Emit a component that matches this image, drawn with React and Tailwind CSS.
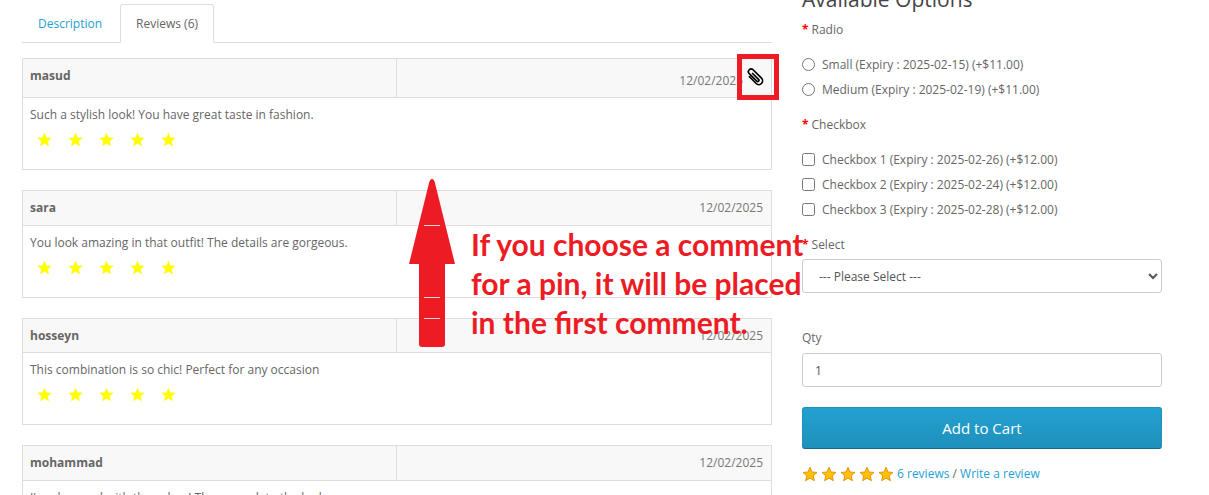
const reviews = [
  { name: 'masud', text: 'Such a stylish look! You have great taste in fashion.', head: 'h-[39px]', nameCls: 'pb-1', dateCls: 'pt-[6px] pr-[28px]' },
  { name: 'sara', text: 'You look amazing in that outfit! The details are gorgeous.', head: 'h-[35px]', nameCls: '', dateCls: 'pr-2' },
  { name: 'hosseyn', text: 'This combination is so chic! Perfect for any occasion', head: 'h-[34px]', nameCls: '', dateCls: 'pr-2' },
  { name: 'mohammad', text: "I'm obsessed with the colors! They complete the look", head: 'h-[35px]', nameCls: '', dateCls: 'pr-2' },
];

function YellowStar() {
  return (
    <svg width="15" height="15" viewBox="0 0 24 24" className="block">
      <path fill="#ffff00" d="M12 1l3.2 7.6 8.2.7-6.2 5.4 1.9 8L12 18.500l-7.100 4.200 1.900-8L.6 9.300l8.200-.7z" />
    </svg>
  );
}

function GoldStar() {
  return (
    <svg width="16" height="16" viewBox="0 0 24 24" className="block">
      <path fill="#ffc107" stroke="#e8930c" strokeWidth="1.500" d="M12 2l3 7 7.500.7-5.700 5 1.700 7.300L12 18.200 5.500 22l1.700-7.300-5.700-5L9 9z" />
    </svg>
  );
}

function ReviewCard({ review }) {
  return (
    <div className="border border-[#ddd] mb-5">
      <div className={`flex ${review.head} bg-[#f8f8f8] border-b border-[#ddd]`}>
        <div className={`w-[374px] border-r border-[#ddd] px-[7px] flex items-center font-bold text-[#666] ${review.nameCls}`}>{review.name}</div>
        <div className={`flex-1 flex items-center justify-end text-[#777] ${review.dateCls}`}>12/02/2025</div>
      </div>
      <div className="h-[71px] px-[7px] pt-2">
        <p className="leading-[18px]">{review.text}</p>
        <div className="flex gap-4 pl-[7px] pt-2">
          {[0, 1, 2, 3, 4].map(i => <YellowStar key={i} />)}
        </div>
      </div>
    </div>
  );
}

function Label({ children, required = true, className = '' }) {
  return (
    <div className={`flex items-center gap-[3px] h-[18px] ${className}`}>
      {required && <span className="text-[#f00] font-bold">*</span>}
      <span>{children}</span>
    </div>
  );
}

function Option({ type, name, children }) {
  return (
    <label className="flex items-center gap-[7px] h-[25px]">
      <input type={type} name={name} className="w-[13px] h-[13px] m-0" />
      <span>{children}</span>
    </label>
  );
}

export default function App() {
  return (
    <div className="relative h-[495px] w-[1209px] overflow-hidden bg-white text-[12px] text-[#666] font-['Open_Sans',sans-serif]">
      <div className="flex items-start pl-[22px] gap-[30px]">
        <div className="w-[750px] pt-1 shrink-0">
          <div className="flex h-[39px] border-b border-[#ddd] pl-[2px] mb-[15px]">
            <div className="px-[14px] mr-1 h-[38px] pt-[2px] flex items-center text-[#23a1d1]">Description</div>
            <div className="px-[15px] h-[39px] pt-[1px] flex items-center bg-white border border-[#ddd] border-b-white rounded-t-[3px]">Reviews (6)</div>
          </div>
          {reviews.map(r => <ReviewCard key={r.name} review={r} />)}
        </div>

        <div className="w-[360px] shrink-0 -mt-[15px]">
          <h3 className="text-[21px] leading-[28px] text-[#444] mb-2">Available Options</h3>
          <Label className="mb-[13px]">Radio</Label>
          <Option type="radio" name="radio">Small (Expiry : 2025-02-15) (+$11.00)</Option>
          <Option type="radio" name="radio">Medium (Expiry : 2025-02-19) (+$11.00)</Option>
          <Label className="mt-[14px] mb-[13px]">Checkbox</Label>
          <Option type="checkbox">Checkbox 1 (Expiry : 2025-02-26) (+$12.00)</Option>
          <Option type="checkbox">Checkbox 2 (Expiry : 2025-02-24) (+$12.00)</Option>
          <Option type="checkbox">Checkbox 3 (Expiry : 2025-02-28) (+$12.00)</Option>
          <Label className="mt-[14px] mb-[5px]">Select</Label>
          <select className="w-full h-[34px] border border-[#ccc] rounded-[3px] bg-white px-3 text-[12px] text-[#555]">
            <option>--- Please Select ---</option>
          </select>
          <Label required={false} className="mt-9 mb-[6px]">Qty</Label>
          <input defaultValue="1" className="block w-full h-[34px] border border-[#ccc] rounded-[3px] px-3 text-[12px] text-[#555]" />
          <button className="block w-full h-[42px] mt-5 rounded-[3px] border border-[#1f90bb] border-b-[#14688a] bg-gradient-to-b from-[#23a1d1] to-[#1f90bb] text-white text-[15px]">Add to Cart</button>
          <div className="flex items-center gap-[3px] mt-4 h-[18px]">
            {[0, 1, 2, 3, 4].map(i => <GoldStar key={i} />)}
            <span className="text-[#23a1d1]">6 reviews <span className="text-[#666]">/</span> Write a review</span>
          </div>
        </div>
      </div>

      {/* annotation drawn on top of the screenshot */}
      <div className="absolute left-[737px] top-[54px] w-[42px] h-[46px] border-[5px] border-[#ed1c24] flex items-center justify-center pr-[7px]">
        <svg width="20" height="20" viewBox="0 0 24 24" fill="none" stroke="#000" strokeWidth="2" strokeLinecap="round">
          <path transform="rotate(-45 12 12)" d="M7.500 7V18.500a4.500 4.500 0 0 0 9 0V4.250a3.250 3.250 0 0 0-6.500 0V17a1.500 1.500 0 0 0 3 0V7" />
        </svg>
      </div>
      <svg className="absolute left-[405px] top-[176px]" width="54" height="174" viewBox="0 0 54 174">
        <path fill="#ed1c24" d="M27 3 Q29 3 30 7 L50 88 H40 V168 Q40 171 37 171 H17 Q14 171 14 168 V88 H4 L24 7 Q25 3 27 3 Z" />
        <path stroke="#f5d5d5" strokeWidth="1" d="M19 49.500H35M19 121.500H35M19 142.500H35" />
      </svg>
      <div className="absolute left-[471px] top-[225px] text-[30px] leading-[39px] font-bold text-[#ed1c24] font-['Lato',sans-serif]">
        <div className="whitespace-nowrap">If you choose a comment</div>
        <div className="whitespace-nowrap">for a pin, it will be placed</div>
        <div className="whitespace-nowrap">in the first comment.</div>
      </div>
    </div>
  );
}
